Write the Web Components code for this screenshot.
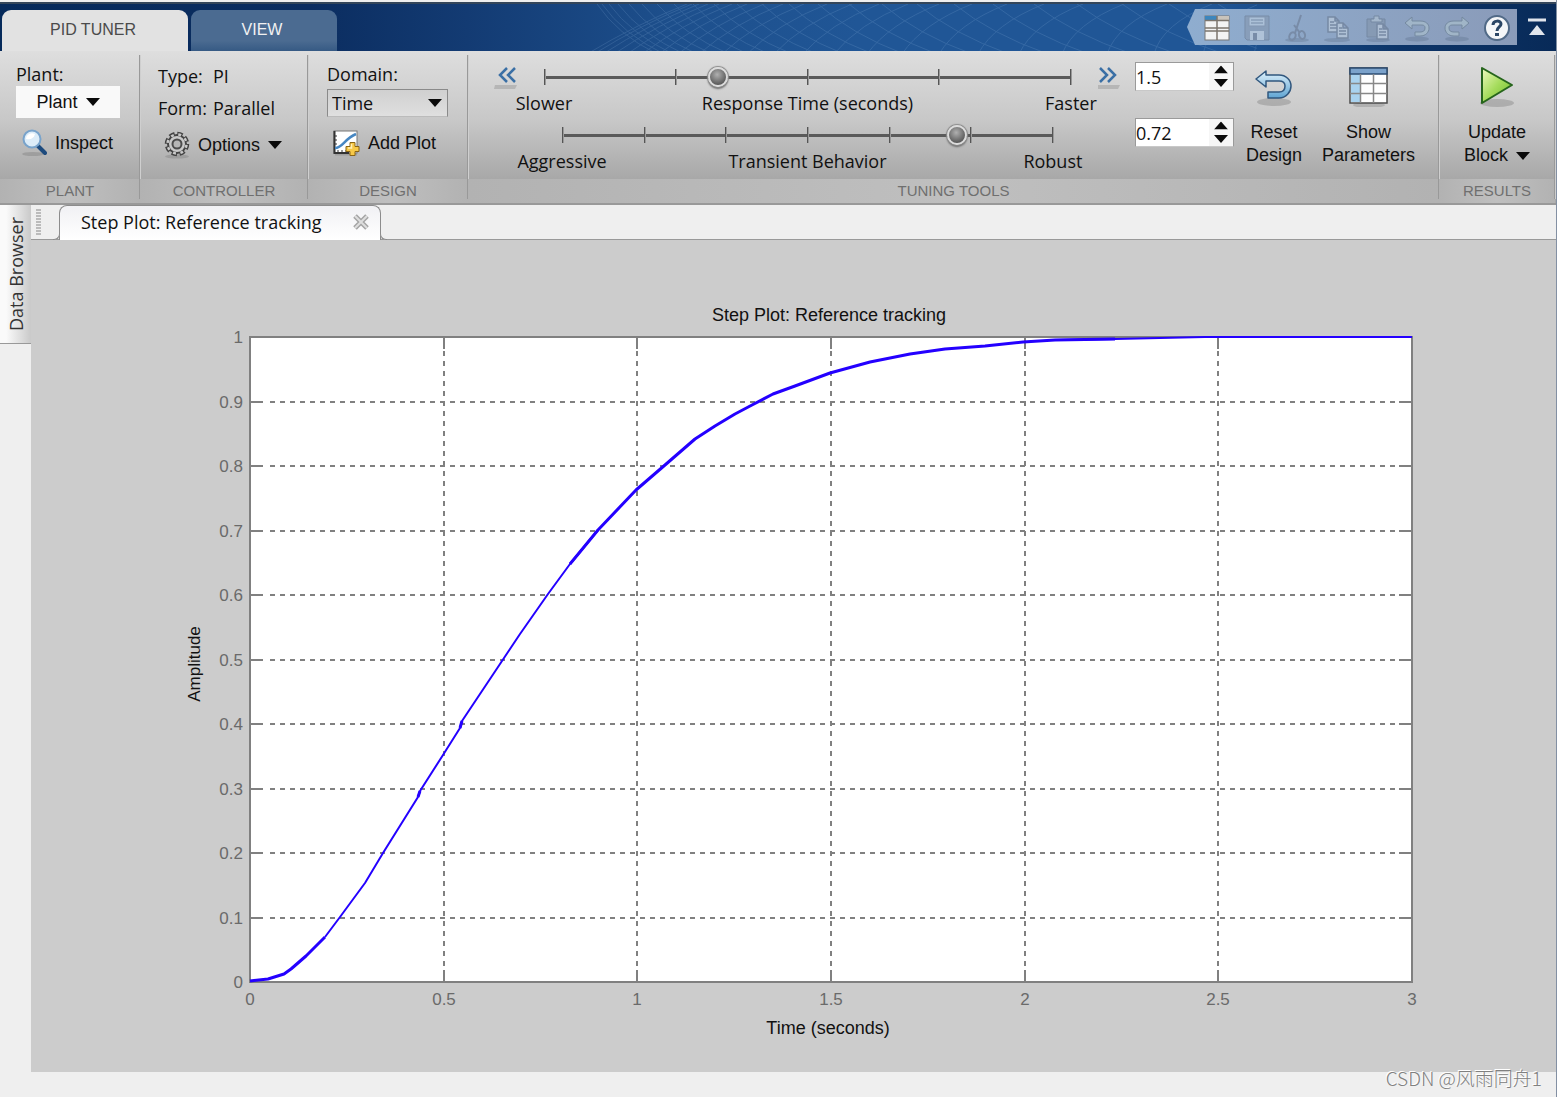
<!DOCTYPE html>
<html lang="en">
<head>
<meta charset="utf-8">
<title>PID Tuner</title>
<style>
    html, body { height: 100%; margin: 0; }
    body { font-family: "Open Sans", "Noto Sans", sans-serif; font-size: 18px; color: #111; background: #efefef; }
</style>
</head>
<body>
<pid-tuner></pid-tuner>

<script>
const ICONS = {
    inspect: `<svg width="26" height="28" viewBox="0 0 26 28"><ellipse cx="12" cy="25" rx="11" ry="2" fill="#8a8a8a" opacity=".55"/><path d="M16 16l8 8" stroke="#1d4a7d" stroke-width="4" stroke-linecap="round"/><circle cx="11" cy="10" r="8.500" fill="#dcecf8" stroke="#78a3cb" stroke-width="2"/><path d="M5 10a6 6 0 0 1 9-5c-1 4-4 6-9 5z" fill="#fff"/></svg>`,
    gear: `<svg width="26" height="28" viewBox="0 0 26 28"><ellipse cx="13" cy="25.500" rx="12" ry="2" fill="#888" opacity=".5"/><circle cx="13" cy="13" r="10" fill="none" stroke="#444" stroke-width="4.500" stroke-dasharray="5.200 2.654"/><circle cx="13" cy="13" r="9" fill="#c9c9c9" stroke="#444" stroke-width="2"/><circle cx="13" cy="13" r="9.500" fill="none" stroke="#c9c9c9" stroke-width="2.500" stroke-dasharray="2.900 4.561" stroke-dashoffset="-1"/><circle cx="13" cy="13" r="4.500" fill="#b5b5b5" stroke="#4b4b4b" stroke-width="2"/></svg>`,
    addplot: `<svg width="28" height="28" viewBox="0 0 28 28"><path d="M3 25.500h22" stroke="#888" stroke-width="2" opacity=".5"/><rect x="2" y="2" width="23" height="22" fill="#fff" stroke="#777"/><path d="M2.500 2v22H17" fill="none" stroke="#333" stroke-width="2"/><path d="M6 24v-3m4 3v-3m4 3v-3M3 7h2m-2 4h2m-2 4h2" stroke="#333"/><path d="M3 19c8 0 9-9 21-14" fill="none" stroke="#4787c2" stroke-width="2.500"/><path d="M18 13.500h5v4h4v5h-4v4h-5v-4h-4v-5h4z" fill="#f7c948" stroke="#8a6414"/><path d="M19.500 15v4H16" fill="none" stroke="#fff0b8" stroke-width="1.500"/></svg>`,
    slower: `<svg width="24" height="26" viewBox="0 0 24 26"><path d="M1 20h22l-2 4H0z" fill="#999" opacity=".5"/><path d="M13 3L6 10l7 7M21 3l-7 7 7 7" fill="none" stroke="#3a6fa5" stroke-width="2.500"/></svg>`,
    faster: `<svg width="24" height="26" viewBox="0 0 24 26"><path d="M1 20h22l-2 4H1z" fill="#999" opacity=".5"/><path d="M3 3l7 7-7 7M11 3l7 7-7 7" fill="none" stroke="#3a6fa5" stroke-width="2.500"/></svg>`,
    reset: `<svg width="40" height="40" viewBox="0 0 40 40"><defs><linearGradient id="g" x2="0" y2="1"><stop stop-color="#e0f2fc"/><stop offset="1" stop-color="#5fa4d2"/></linearGradient></defs><ellipse cx="20" cy="35" rx="17" ry="4" fill="#888" opacity=".45"/><path d="M2 12L12 4v4h13c7 0 12 5 12 11s-5 12-12 12H14v-6h11c3.500 0 6-2 6-6s-2.500-5-6-5H12v6z" fill="url(#g)" stroke="#31577e" stroke-width="1.500" stroke-linejoin="round"/></svg>`,
    params: `<svg width="40" height="40" viewBox="0 0 40 40"><ellipse cx="21" cy="38" rx="16" ry="3" fill="#888" opacity=".4"/><rect x="2" y="1" width="37" height="35" fill="#fff" stroke="#4c4c4c" stroke-width="1.500"/><rect x="3" y="6" width="9" height="29" fill="#a9d2ee"/><rect x="2" y="1" width="37" height="6" fill="#7ba2cb" stroke="#2d4c72" stroke-width="1.500"/><path d="M12.500 7v29M25.500 7v29M2 16.500h37M2 26.500h37" stroke="#888" stroke-width="1.500"/></svg>`,
    run: `<svg width="40" height="40" viewBox="0 2 40 40"><defs><linearGradient id="r" x2="1" y2="1"><stop stop-color="#f0fac0"/><stop offset=".5" stop-color="#a5dc5c"/><stop offset="1" stop-color="#6cb928"/></linearGradient></defs><ellipse cx="20" cy="38" rx="17" ry="4" fill="#888" opacity=".45"/><path d="M5 3l30 17L5 38z" fill="url(#r)" stroke="#26651c" stroke-width="2" stroke-linejoin="round"/></svg>`,
    layout: `<svg width="28" height="28" viewBox="0 0 28 28"><rect x="2" y="2" width="24" height="24" fill="#f3f3f3" stroke="#777"/><rect x="2" y="2" width="12" height="4" fill="#3c86bd"/><rect x="14" y="2" width="12" height="4" fill="#c8c3bb"/><path d="M14 2v24M2 6.500h24M2 14h24M2 17h24" stroke="#7c756d" stroke-width="1.500"/></svg>`,
    save: `<svg width="28" height="28" viewBox="0 0 28 28" opacity=".8"><path d="M2 2h24v24H4l-2-2z" fill="#889cb6" stroke="#73859f"/><rect x="6" y="3" width="16" height="9" fill="#b3c6da" stroke="#8193ac"/><path d="M8 6h12M8 9h12" stroke="#73859f"/><path d="M7 17h14v9H7z" fill="#b8c9db"/><rect x="10" y="19" width="4" height="7" fill="#73859f"/></svg>`,
    cut: `<svg width="28" height="28" viewBox="0 0 28 28" opacity=".8"><ellipse cx="14" cy="26" rx="12" ry="2" fill="#687c98" opacity=".5"/><path d="M18 1l-6 18M11 11l6 8" fill="none" stroke="#73859f" stroke-width="2"/><ellipse cx="9.500" cy="22" rx="3" ry="4" transform="rotate(25 9 22)" fill="none" stroke="#73859f" stroke-width="2"/><ellipse cx="19" cy="21" rx="3" ry="4" transform="rotate(-15 19 21)" fill="none" stroke="#73859f" stroke-width="2"/></svg>`,
    copy: `<svg width="28" height="28" viewBox="0 0 28 28" opacity=".85"><ellipse cx="14" cy="26" rx="13" ry="2" fill="#687c98" opacity=".5"/><g fill="#b4c5d8" stroke="#73859f" stroke-width="1.500"><path d="M5 3h7l4 4v11H5zM12 3v4h4M7 8h4M7 11h7M7 14h7"/><path d="M14 9h6l5 5v10H14zM20 9v5h5M16 14h3M16 17h7M16 20h7"/></g></svg>`,
    paste: `<svg width="28" height="28" viewBox="0 0 28 28" opacity=".85"><ellipse cx="15" cy="26" rx="12" ry="2" fill="#687c98" opacity=".5"/><path d="M4 5h18v18H4z" fill="#8599b2" stroke="#73859f"/><path d="M8 8V5h3V2h5v3h3v3z" fill="#a9bbce" stroke="#73859f"/><path d="M14 10h6l5 5v10H14zM20 10v5h5M16 15h3M16 18h7M16 21h7" fill="#b4c5d8" stroke="#73859f" stroke-width="1.500"/></svg>`,
    undo: `<svg width="28" height="28" viewBox="0 0 28 28" opacity=".9"><ellipse cx="14" cy="25" rx="12" ry="2.500" fill="#687c98" opacity=".5"/><path d="M2 9l7-6v4h8c6 0 9 3 9 7s-3 8-9 8h-5v-4h5c3 0 5-1 5-4s-2-3-5-3H9v4z" fill="#a3b8c9" stroke="#72879d"/></svg>`,
    redo: `<svg width="28" height="28" viewBox="0 0 28 28" opacity=".9"><ellipse cx="14" cy="25" rx="12" ry="2.500" fill="#687c98" opacity=".5"/><path d="M26 9l-7-6v4h-8c-6 0-9 3-9 7s3 8 9 8h5v-4h-5c-3 0-5-1-5-4s2-3 5-3h8v4z" fill="#a3b8c9" stroke="#72879d"/></svg>`,
    help: `<svg width="28" height="28" viewBox="0 0 28 28"><circle cx="14" cy="14" r="12" fill="#f4f6f8" stroke="#516a87" stroke-width="2"/><path d="M10 11c0-5 8-5 8-1 0 3-4 3-4 7" fill="none" stroke="#2b4665" stroke-width="3"/><rect x="12" y="19" width="4" height="3" fill="#2b4665"/></svg>`,
    minimize: `<svg width="20" height="20" viewBox="0 0 20 20"><path d="M1 3h18" stroke="#e0e5ec" stroke-width="3"/><path d="M10 8l8 10H2z" fill="#e0e5ec"/></svg>`,
    caret: `<svg width="14" height="8" viewBox="0 0 14 8"><path d="M0 0h14L7 8z" fill="#0a0a0a"/></svg>`,
    close: `<svg width="18" height="18" viewBox="0 0 18 18"><path d="M3 3l12 12M15 3L3 15" stroke="#a5a5a5" stroke-width="5"/><path d="M3 3l12 12M15 3L3 15" stroke="#dedede" stroke-width="2"/></svg>`
};

class UiIcon extends HTMLElement {
    connectedCallback() {
        this.attachShadow({ mode: 'open' });
        this.shadowRoot.innerHTML = `
            <style>
                :host { display: inline-flex; flex: none; }
                svg { display: block; }
            </style>
            ${ICONS[this.getAttribute('name')]}
        `;
    }
}
customElements.define('ui-icon', UiIcon);

// Toolstrip button; "stacked" puts the icon over the text, "boxed" is the white drop-down
class ToolButton extends HTMLElement {
    connectedCallback() {
        this.attachShadow({ mode: 'open' });
        this.shadowRoot.innerHTML = `
            <style>
                :host { display: block; }
                button {
                    display: flex;
                    align-items: center;
                    gap: 8px;
                    height: 32px;
                    padding: 0;
                    border: 0;
                    background: none;
                    color: #111;
                    font: 18px/23px "Liberation Sans", Arial, sans-serif;
                    white-space: nowrap;
                }
                :host([stacked]) button { flex-direction: column; height: auto; gap: 14px; }
                :host([boxed]) button { justify-content: center; width: 104px; background: #f9f9f9; }
            </style>
            <button type="button"><slot></slot></button>
        `;
    }
}
customElements.define('tool-button', ToolButton);

class ToolSection extends HTMLElement {
    connectedCallback() {
        this.attachShadow({ mode: 'open' });
        this.shadowRoot.innerHTML = `
            <style>
                :host {
                    display: flex;
                    flex-direction: column;
                    position: relative;
                    box-sizing: border-box;
                }
                :host::after {
                    content: "";
                    position: absolute;
                    right: 0;
                    top: 4px;
                    bottom: 4px;
                    width: 1px;
                    background: #999;
                    box-shadow: 1px 0 #cfcfcf;
                }
                .body { flex: 1; padding: 11px 16px 0; }
                h2 {
                    margin: 0;
                    height: 24px;
                    font: 15px/23px "Liberation Sans", Arial, sans-serif;
                    color: #6f6f6f;
                    text-align: center;
                    background: linear-gradient(90deg, #b2b2b2, #bfbfbf 50%, #b2b2b2);
                }
            </style>
            <div class="body"><slot></slot></div>
            <h2>${this.getAttribute('label')}</h2>
        `;
    }
}
customElements.define('tool-section', ToolSection);

class TickSlider extends HTMLElement {
    connectedCallback() {
        const get = name => this.getAttribute(name);
        const ticks = '<i></i>'.repeat(Number(get('ticks')));
        this.attachShadow({ mode: 'open' });
        this.shadowRoot.innerHTML = `
            <style>
                :host { display: block; }
                .rail { display: grid; height: 24px; }
                .rail > * { grid-area: 1 / 1; }
                .ticks {
                    display: flex;
                    justify-content: space-between;
                    align-items: center;
                    margin: 0 10px;
                    background: linear-gradient(#5a5a5a, #5a5a5a) center / 100% 3px no-repeat;
                }
                .ticks i { width: 1px; height: 16px; background: #555; box-shadow: 1px 0 #999; }
                input {
                    appearance: none;
                    width: 100%;
                    height: 24px;
                    margin: 0;
                    background: none;
                }
                input::-webkit-slider-thumb {
                    appearance: none;
                    width: 20px;
                    height: 20px;
                    border: 2px solid #dcdcdc;
                    border-radius: 50%;
                    background: radial-gradient(circle at 45% 35%, #b0b0b0, #585858 75%);
                    box-shadow: 0 0 1px 1px #8a8a8a, 0 2px 2px #666;
                }
                .labels {
                    display: flex;
                    justify-content: space-between;
                    margin: 2px 10px 0;
                    line-height: 24px;
                }
                /* zero-width boxes, so each text is centred on its tick */
                .labels > * { display: flex; justify-content: center; width: 0; white-space: nowrap; }
            </style>
            <div class="rail">
                <div class="ticks">${ticks}</div>
                <input id="range" type="range" min="0" max="1000" value="${get('value')}">
            </div>
            <div class="labels">
                <span>${get('low')}</span>
                <label for="range">${get('label')}</label>
                <span>${get('high')}</span>
            </div>
        `;
    }
}
customElements.define('tick-slider', TickSlider);

class NumberSpinner extends HTMLElement {
    connectedCallback() {
        this.attachShadow({ mode: 'open' });
        this.shadowRoot.innerHTML = `
            <style>
                :host {
                    display: flex;
                    box-sizing: border-box;
                    width: 99px;
                    height: 29px;
                    border: 1px solid #9a9a9a;
                    border-bottom-color: #c8c8c8;
                    background: #fff;
                }
                input {
                    flex: 1;
                    min-width: 0;
                    padding: 0;
                    border: 0;
                    background: none;
                    font: inherit;
                    color: inherit;
                    outline: 0;
                }
                .steps { display: flex; flex-direction: column; width: 24px; background: #f6f6f6; }
                button {
                    flex: 1;
                    display: flex;
                    align-items: center;
                    justify-content: center;
                    padding: 0;
                    border: 0;
                    background: none;
                }
                .up { transform: rotate(180deg); }
            </style>
            <input type="text" value="${this.getAttribute('value')}" aria-label="${this.getAttribute('label')}">
            <div class="steps">
                <button class="up" type="button" aria-label="Increase"><ui-icon name="caret"></ui-icon></button>
                <button type="button" aria-label="Decrease"><ui-icon name="caret"></ui-icon></button>
            </div>
        `;
        const input = this.shadowRoot.querySelector('input');
        const [up, down] = this.shadowRoot.querySelectorAll('button');
        const step = d => { input.value = Number((Number(input.value) + d).toFixed(2)); };
        up.onclick = () => step(0.01);
        down.onclick = () => step(-0.01);
    }
}
customElements.define('number-spinner', NumberSpinner);

class TitleRibbon extends HTMLElement {
    connectedCallback() {
        const tools = [['layout', 'Layout'], ['save', 'Save'], ['cut', 'Cut'], ['copy', 'Copy'],
            ['paste', 'Paste'], ['undo', 'Undo'], ['redo', 'Redo'], ['help', 'Help']];
        let mesh = '';
        for (let i = 0; i < 24; i++) {
            const x = 60 + i * i + i * 4;
            mesh += `<path d="M${x} 0q${20 + i} 30 ${60 + i * 2} 50M${x + 90} 0q-50 20 -${100 - i * 2} 50"/>`;
        }
        this.attachShadow({ mode: 'open' });
        this.shadowRoot.innerHTML = `
            <style>
                :host {
                    display: flex;
                    position: relative;
                    height: 47px;
                    padding-left: 2px;
                    border-top: 2px solid #34465a;
                    background: linear-gradient(90deg, #062a5b, #0b2d60 20%, #133b73 30%, #1d4f8c 43%, #205696 55%, #205696 78%, #0c3468 90%, #082a58);
                }
                .mesh {
                    position: absolute;
                    right: 300px;
                    top: 0;
                    width: 720px;
                    height: 100%;
                    opacity: .16;
                }
                .tab {
                    align-self: flex-end;
                    height: 41px;
                    padding: 0 4px 2px 0;
                    border: 0;
                    border-radius: 9px 9px 0 0;
                    font: 16px "Liberation Sans", Arial, sans-serif;
                    text-align: center;
                }
                .active { width: 186px; background: #e2e2e2; color: #4b4b4b; }
                .view { width: 146px; margin-left: 3px; background: linear-gradient(#4b6b91 75%, #365a84); color: #f1f1f1; }
                .quick {
                    position: relative;
                    display: flex;
                    align-items: center;
                    box-sizing: border-box;
                    height: 36px;
                    margin: 5px 0 0 auto;
                    padding: 2px 0 0 10px;
                    background: linear-gradient(90deg, #8fadcf, #8a9bb9);
                    clip-path: polygon(8px 0, 100% 0, 100% 100%, 8px 100%, 0 50%);
                }
                .quick button, .min {
                    display: flex;
                    align-items: center;
                    justify-content: center;
                    width: 40px;
                    padding: 0;
                    border: 0;
                    background: none;
                }
                .min { position: relative; height: 46px; }
            </style>
            <svg class="mesh" viewBox="0 0 720 47" preserveAspectRatio="none" fill="none" stroke="#9ec4ea">${mesh}</svg>
            <button class="tab active" type="button">PID TUNER</button>
            <button class="tab view" type="button">VIEW</button>
            <div class="quick">
                ${tools.map(([n, l]) => `<button type="button" aria-label="${l}"><ui-icon name="${n}"></ui-icon></button>`).join('')}
            </div>
            <button class="min" type="button" aria-label="Minimize toolstrip"><ui-icon name="minimize"></ui-icon></button>
        `;
    }
}
customElements.define('title-ribbon', TitleRibbon);

class ToolStrip extends HTMLElement {
    connectedCallback() {
        this.attachShadow({ mode: 'open' });
        this.shadowRoot.innerHTML = `
            <style>
                :host {
                    display: flex;
                    height: 152px;
                    border-bottom: 2px solid #999;
                    background: linear-gradient(#dedede, #c8c8c8 45%, #a8a8a8 84%);
                }
                .plant { width: 140px; }
                .controller { width: 168px; }
                .design { width: 160px; }
                .tuning { flex: 1; }
                .results { width: 116px; margin-right: 2px; }
                .col { display: flex; flex-direction: column; line-height: 24px; }
                .col > tool-button:last-child { margin-top: 9px; }
                .plant .col > tool-button:last-child, .design .col > tool-button:last-child { padding-left: 5px; }
                .form { display: grid; grid-template-columns: 47px auto; gap: 8px; padding: 2px 0 0 2px; }
                .controller tool-button { padding-left: 8px; }
                .design .col { margin-left: 3px; }
                .pick { display: grid; align-items: center; width: 121px; margin: 3px 0 1px; }
                .pick > * { grid-area: 1 / 1; }
                .pick ui-icon { justify-self: end; margin-right: 6px; pointer-events: none; }
                select {
                    appearance: none;
                    width: 100%;
                    height: 28px;
                    padding: 0 4px;
                    border: 1px solid #8a8a8a;
                    border-bottom-color: #bbb;
                    border-radius: 0;
                    background: linear-gradient(#d0d0d0, #dfdfdf);
                    font: inherit;
                    color: inherit;
                }
                .tools { display: flex; }
                .sliders {
                    flex: 1;
                    display: grid;
                    grid-template-columns: 24px minmax(0, 1fr) 24px;
                    column-gap: 16px;
                    row-gap: 8px;
                    margin: 3px 14px 0 10px;
                }
                .sliders button { display: flex; height: 26px; padding: 0; border: 0; background: none; }
                .second { grid-column: 2; margin: 0 18px; }
                .spins { display: flex; flex-direction: column; gap: 27px; }
                .big { display: flex; gap: 20px; padding: 5px 8px 0 12px; }
                .results tool-button { display: grid; justify-content: center; padding-top: 5px; }
                .drop { display: flex; align-items: center; gap: 8px; }
            </style>
            <tool-section class="plant" label="PLANT">
                <div class="col">
                    <span>Plant:</span>
                    <tool-button boxed>Plant <ui-icon name="caret"></ui-icon></tool-button>
                    <tool-button><ui-icon name="inspect"></ui-icon>Inspect</tool-button>
                </div>
            </tool-section>
            <tool-section class="controller" label="CONTROLLER">
                <div class="col">
                    <div class="form">
                        <span>Type:</span><span>PI</span>
                        <span>Form:</span><span>Parallel</span>
                    </div>
                    <tool-button><ui-icon name="gear"></ui-icon>Options <ui-icon name="caret"></ui-icon></tool-button>
                </div>
            </tool-section>
            <tool-section class="design" label="DESIGN">
                <div class="col">
                    <label for="domain">Domain:</label>
                    <div class="pick">
                        <select id="domain"><option>Time</option><option>Frequency</option></select>
                        <ui-icon name="caret"></ui-icon>
                    </div>
                    <tool-button><ui-icon name="addplot"></ui-icon>Add Plot</tool-button>
                </div>
            </tool-section>
            <tool-section class="tuning" label="TUNING TOOLS">
                <div class="tools">
                    <div class="sliders">
                        <button type="button" aria-label="Slower range"><ui-icon name="slower"></ui-icon></button>
                        <tick-slider low="Slower" label="Response Time (seconds)" high="Faster" ticks="5" value="330"></tick-slider>
                        <button type="button" aria-label="Faster range"><ui-icon name="faster"></ui-icon></button>
                        <tick-slider class="second" low="Aggressive" label="Transient Behavior" high="Robust" ticks="7" value="804"></tick-slider>
                    </div>
                    <div class="spins">
                        <number-spinner value="1.5" label="Response time"></number-spinner>
                        <number-spinner value="0.72" label="Transient behavior"></number-spinner>
                    </div>
                    <div class="big">
                        <tool-button stacked><ui-icon name="reset"></ui-icon><span>Reset<br>Design</span></tool-button>
                        <tool-button stacked><ui-icon name="params"></ui-icon><span>Show<br>Parameters</span></tool-button>
                    </div>
                </div>
            </tool-section>
            <tool-section class="results" label="RESULTS">
                <tool-button stacked><ui-icon name="run"></ui-icon><span>Update<span class="drop">Block <ui-icon name="caret"></ui-icon></span></span></tool-button>
            </tool-section>
        `;
    }
}
customElements.define('tool-strip', ToolStrip);

class DocumentTabs extends HTMLElement {
    connectedCallback() {
        this.attachShadow({ mode: 'open' });
        this.shadowRoot.innerHTML = `
            <style>
                :host { display: flex; height: 35px; background: linear-gradient(#999, #999) bottom / 100% 1px no-repeat #efefef; }
                .grip {
                    width: 5px;
                    height: 26px;
                    margin: 4px 18px 0 5px;
                    background: repeating-linear-gradient(#bbb 0 2px, #efefef 2px 3px);
                }
                .tab {
                    display: flex;
                    position: relative;
                    align-items: center;
                    gap: 30px;
                    padding: 0 10px 2px 21px;
                    border: 1px solid #8c8c8c;
                    border-bottom: 0;
                    border-radius: 8px 8px 0 0;
                    background: linear-gradient(#f1f1f4, #fff);
                    line-height: 24px;
                }
                /* feet that curve out into the line under the tabs */
                .tab::before, .tab::after {
                    content: "";
                    position: absolute;
                    bottom: 0;
                    width: 6px;
                    height: 6px;
                    border: 0 solid #8c8c8c;
                    background: #efefef;
                }
                .tab::before { right: 100%; border-width: 0 1px 1px 0; border-bottom-right-radius: 6px; }
                .tab::after { left: 100%; border-width: 0 0 1px 1px; border-bottom-left-radius: 6px; }
                button { display: flex; padding: 0; border: 0; background: none; }
            </style>
            <div class="grip"></div>
            <div class="tab"><slot></slot><button type="button" aria-label="Close"><ui-icon name="close"></ui-icon></button></div>
        `;
    }
}
customElements.define('document-tabs', DocumentTabs);

class StepPlot extends HTMLElement {
    connectedCallback() {
        const W = 1162, H = 645;
        // response curve in axes pixels, y down; each run has its own line weight
        const runs = [
            [3, '0,644 18,642 34,637 41,632 56,619 75,600'],
            [2, '75,600 90,580 115,546 133,516 168,460 170,454 193,418 210,391 212,384 254,321 270,297 298,257 320,227 348,193'],
            [3, '168,460 170,454'],
            [3, '210,391 212,384'],
            [3, '320,227 348,193 386,153 415,128 445,102 465,89 485,77 502,68 523,57 545,49 580,36 620,25 660,17 695,12 735,9 773,5 805,3 865,2'],
            [2, '805,3 865,2 955,0 1162,0']
        ];
        let grid = '', text = '';
        for (let i = 0; i <= 10; i++) {
            const y = Math.round(H - i * H / 10);
            if (i > 0 && i < 10) {
                grid += `<path class="dash" d="M20 ${y}H${W - 14}"/><path d="M0 ${y}h13M${W} ${y}h-13"/>`;
            }
            text += `<text x="-7" y="${y + 6}" text-anchor="end">${i / 10}</text>`;
        }
        for (let i = 0; i <= 6; i++) {
            const x = Math.round(i * W / 6);
            if (i > 0 && i < 6) {
                grid += `<path class="dash" d="M${x} 14V${H - 14}"/><path d="M${x} 0v12M${x} ${H}v-12"/>`;
            }
            text += `<text x="${x}" y="${H + 23}" text-anchor="middle">${i / 2}</text>`;
        }
        this.attachShadow({ mode: 'open' });
        this.shadowRoot.innerHTML = `
            <style>
                :host { display: block; background: #ccc; }
                svg { display: block; width: 100%; height: 100%; }
                path, rect { fill: none; stroke: #808080; stroke-width: 2; shape-rendering: crispEdges; }
                rect { fill: #fff; }
                .dash { stroke-dasharray: 5 5; }
                polyline { fill: none; stroke: #2400ff; stroke-linejoin: round; }
                text { font: 17px "Liberation Sans", Arial, sans-serif; fill: #6a6a6a; }
                .title { fill: #111; }
                .wide { font-size: 18px; }
            </style>
            <svg viewBox="0 0 1526 832">
                <g transform="translate(219 97)">
                    <rect width="${W}" height="${H}"/>
                    ${grid}
                    ${runs.map(([w, p]) => `<polyline stroke-width="${w}" points="${p}"/>`).join('')}
                    ${text}
                    <text class="title wide" x="579" y="-16" text-anchor="middle">Step Plot: Reference tracking</text>
                    <text class="title wide" x="578" y="697" text-anchor="middle">Time (seconds)</text>
                    <text class="title" transform="translate(-50 327) rotate(-90)" text-anchor="middle">Amplitude</text>
                </g>
            </svg>
        `;
    }
}
customElements.define('step-plot', StepPlot);

class PidTuner extends HTMLElement {
    connectedCallback() {
        this.attachShadow({ mode: 'open' });
        this.shadowRoot.innerHTML = `
            <style>
                :host {
                    display: flex;
                    flex-direction: column;
                    position: relative;
                    box-sizing: border-box;
                    min-height: 100%;
                    padding: 2px 0 25px;
                }
                .work { flex: 1; display: flex; }
                aside { width: 31px; background: #efefef; }
                .browser {
                    display: flex;
                    align-items: center;
                    justify-content: center;
                    width: 31px;
                    height: 139px;
                    padding: 0;
                    border: 0;
                    border-bottom: 1px solid #999;
                    background: linear-gradient(90deg, #fafafa 20%, #c9c9c9);
                    color: #333;
                    font: inherit;
                }
                .browser span { writing-mode: vertical-rl; transform: rotate(180deg); }
                main { flex: 1; display: flex; flex-direction: column; min-width: 0; }
                step-plot { flex: 1; }
                /* right edge of the window frame */
                :host::after {
                    content: "";
                    position: absolute;
                    top: 0;
                    right: 0;
                    bottom: 0;
                    width: 1px;
                    background: #8390a3;
                }
                .mark {
                    position: absolute;
                    right: 15px;
                    bottom: 5px;
                    font: 300 19px/28px "Noto Sans CJK SC", sans-serif;
                    color: #808080;
                    text-shadow: -1px -1px #fff;
                }
            </style>
            <title-ribbon></title-ribbon>
            <tool-strip></tool-strip>
            <div class="work">
                <aside><button class="browser" type="button"><span>Data Browser</span></button></aside>
                <main>
                    <document-tabs>Step Plot: Reference tracking</document-tabs>
                    <step-plot></step-plot>
                </main>
            </div>
            <div class="mark">CSDN @风雨同舟1</div>
        `;
    }
}
customElements.define('pid-tuner', PidTuner);
</script>
</body>
</html>
